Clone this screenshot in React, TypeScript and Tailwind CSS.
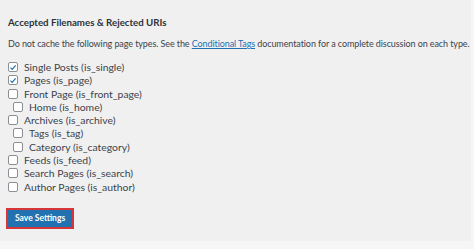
import React from 'react';

// Page types shown in the "do not cache" list
const pageTypes = [
  { label: 'Single Posts (is_single)', checked: true, indent: false },
  { label: 'Pages (is_page)', checked: true, indent: false },
  { label: 'Front Page (is_front_page)', checked: false, indent: false },
  { label: 'Home (is_home)', checked: false, indent: true },
  { label: 'Archives (is_archive)', checked: false, indent: false },
  { label: 'Tags (is_tag)', checked: false, indent: true },
  { label: 'Category (is_category)', checked: false, indent: true },
  { label: 'Feeds (is_feed)', checked: false, indent: false },
  { label: 'Search Pages (is_search)', checked: false, indent: false },
  { label: 'Author Pages (is_author)', checked: false, indent: false },
];

const CheckBox = ({ checked }: { checked: boolean }) => (
  <span className="flex h-[10px] w-[10px] shrink-0 items-center justify-center rounded-[2px] border border-[#8c8f94] bg-white">
    {checked && (
      <svg viewBox="0 0 10 10" className="h-[9px] w-[9px]">
        <path d="M1.8 5.2 L4 7.3 L8.3 2.4" fill="none" stroke="#2271b1" strokeWidth="1.5" />
      </svg>
    )}
  </span>
);

const App = () => {
  return (
    <div
      className="flex h-[249px] w-[474px] flex-col bg-[#f0f0f1] text-[#3c434a]"
      style={{ fontFamily: 'Lato, "Open Sans", sans-serif' }}
    >
      <div className="flex-1 border-r-[3px] border-[#f6f6f7] px-2 pt-[16px]">
        <h2 className="text-[9.7px] font-bold leading-[12px] text-[#2c3338]">
          Accepted Filenames &amp; Rejected URIs
        </h2>
        <p className="mt-[10px] text-[9px] leading-[12px] tracking-[-0.09px] whitespace-nowrap">
          Do not cache the following page types. See the{' '}
          <a href="#" className="text-[#2271b1] underline">Conditional Tags</a>{' '}
          documentation for a complete discussion on each type.
        </p>

        <ul className="mt-[12px] flex flex-col gap-[3.3px]">
          {pageTypes.map(item => (
            <li
              key={item.label}
              className={`flex h-[10px] items-center gap-[6px] text-[10.4px] leading-[10px] ${item.indent ? 'pl-[5px]' : ''}`}
            >
              <CheckBox checked={item.checked} />
              <span>{item.label}</span>
            </li>
          ))}
        </ul>

        <div className="-ml-[2px] mt-[16px] inline-flex border-2 border-[#d63638]">
          <button className="h-[17px] bg-[#2271b1] px-[7px] text-[8.5px] font-bold leading-[17px] text-white">
            Save Settings
          </button>
        </div>
      </div>
      <div className="h-[8px] bg-[#f6f6f7]" />
    </div>
  );
};

export default App;
